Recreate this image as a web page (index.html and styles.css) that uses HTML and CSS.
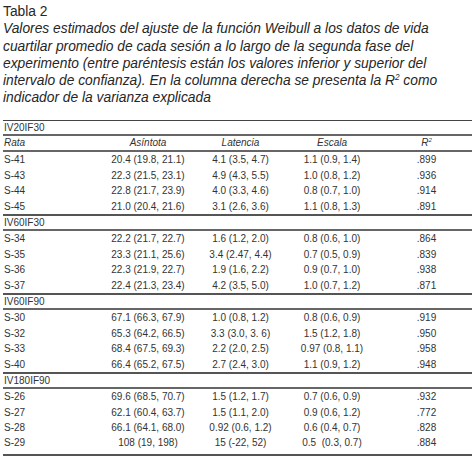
FILE: index.html
```html
<!DOCTYPE html>
<html lang="es">
<head>
<meta charset="utf-8">
<title>Tabla 2</title>
<link rel="stylesheet" href="styles.css">
</head>
<body>
<div class="page">
  <div class="caption">
    <div class="title">Tabla 2</div>
    <div class="desc">Valores estimados del ajuste de la función Weibull a los datos de vida<br>cuartilar promedio de cada sesión a lo largo de la segunda fase del<br>experimento (entre paréntesis están los valores inferior y superior del<br>intervalo de confianza). En la columna derecha se presenta la R<sup>2</sup> como<br>indicador de la varianza explicada</div>
  </div>
  <table class="data">
    <colgroup>
      <col class="c-rata"><col class="c-asi"><col class="c-lat"><col class="c-esc"><col class="c-r2">
    </colgroup>
    <tbody>
      <tr class="group first"><td colspan="5">IV20IF30</td></tr>
      <tr class="head"><td class="l">Rata</td><td>Asíntota</td><td>Latencia</td><td>Escala</td><td>R<sup>2</sup></td></tr>
      <tr><td class="l">S-41</td><td>20.4 (19.8, 21.1)</td><td>4.1 (3.5, 4.7)</td><td>1.1 (0.9, 1.4)</td><td>.899</td></tr>
      <tr><td class="l">S-43</td><td>22.3 (21.5, 23.1)</td><td>4.9 (4.3, 5.5)</td><td>1.0 (0.8, 1.2)</td><td>.936</td></tr>
      <tr><td class="l">S-44</td><td>22.8 (21.7, 23.9)</td><td>4.0 (3.3, 4.6)</td><td>0.8 (0.7, 1.0)</td><td>.914</td></tr>
      <tr class="last"><td class="l">S-45</td><td>21.0 (20.4, 21.6)</td><td>3.1 (2.6, 3.6)</td><td>1.1 (0.8, 1.3)</td><td>.891</td></tr>

      <tr class="group"><td colspan="5">IV60IF30</td></tr>
      <tr><td class="l">S-34</td><td>22.2 (21.7, 22.7)</td><td>1.6 (1.2, 2.0)</td><td>0.8 (0.6, 1.0)</td><td>.864</td></tr>
      <tr><td class="l">S-35</td><td>23.3 (21.1, 25.6)</td><td>3.4 (2.47, 4.4)</td><td>0.7 (0.5, 0.9)</td><td>.839</td></tr>
      <tr><td class="l">S-36</td><td>22.3 (21.9, 22.7)</td><td>1.9 (1.6, 2.2)</td><td>0.9 (0.7, 1.0)</td><td>.938</td></tr>
      <tr class="last"><td class="l">S-37</td><td>22.4 (21.3, 23.4)</td><td>4.2 (3.5, 5.0)</td><td>1.0 (0.7, 1.2)</td><td>.871</td></tr>

      <tr class="group"><td colspan="5">IV60IF90</td></tr>
      <tr><td class="l">S-30</td><td>67.1 (66.3, 67.9)</td><td>1.0 (0.8, 1.2)</td><td>0.8 (0.6, 0.9)</td><td>.919</td></tr>
      <tr><td class="l">S-32</td><td>65.3 (64.2, 66.5)</td><td>3.3 (3.0, 3. 6)</td><td>1.5 (1.2, 1.8)</td><td>.950</td></tr>
      <tr><td class="l">S-33</td><td>68.4 (67.5, 69.3)</td><td>2.2 (2.0, 2.5)</td><td>0.97 (0.8, 1.1)</td><td>.958</td></tr>
      <tr class="last"><td class="l">S-40</td><td>66.4 (65.2, 67.5)</td><td>2.7 (2.4, 3.0)</td><td>1.1 (0.9, 1.2)</td><td>.948</td></tr>

      <tr class="group"><td colspan="5">IV180IF90</td></tr>
      <tr><td class="l">S-26</td><td>69.6 (68.5, 70.7)</td><td>1.5 (1.2, 1.7)</td><td>0.7 (0.6, 0.9)</td><td>.932</td></tr>
      <tr><td class="l">S-27</td><td>62.1 (60.4, 63.7)</td><td>1.5 (1.1, 2.0)</td><td>0.9 (0.6, 1.2)</td><td>.772</td></tr>
      <tr><td class="l">S-28</td><td>66.1 (64.1, 68.0)</td><td>0.92 (0.6, 1.2)</td><td>0.6 (0.4, 0.7)</td><td>.828</td></tr>
      <tr class="last final"><td class="l">S-29</td><td>108 (19, 198)</td><td>15 (-22, 52)</td><td>0.5&nbsp; (0.3, 0.7)</td><td>.884</td></tr>
    </tbody>
  </table>
</div>
</body>
</html>
```

FILE: styles.css
```css
html, body {
  margin: 0;
  padding: 0;
  background: #ffffff;
}

.page {
  padding: 3px 2px 0 3px;
  font-family: "Liberation Sans", Arial, sans-serif;
  color: #262626;
}

.caption {
  font-size: 13.8px;
  line-height: 17.3px;
  white-space: nowrap;
}

.caption .desc {
  font-style: italic;
}

.caption sup,
.data sup {
  font-size: 0.6em;
  line-height: 0;
  vertical-align: 0.6em;
}

.data {
  margin-top: 13px;
  width: 469px;
  border-collapse: collapse;
  table-layout: fixed;
  font-size: 10px;
  color: #333333;
}

.c-rata { width: 95px; }
.c-asi { width: 100px; }
.c-lat { width: 85px; }
.c-esc { width: 98px; }
.c-r2 { width: 91px; }

.data td {
  padding: 0;
  height: 15.5px;
  text-align: center;
  white-space: nowrap;
  vertical-align: middle;
}

.data td.l {
  text-align: left;
  padding-left: 1px;
}

.data tr.group td {
  text-align: left;
  padding-left: 1px;
  height: 13px;
  border-top: 2px solid #555555;
  border-bottom: 2px solid #666666;
}

.data tr.group.first td {
  border-top: 1.5px solid #444444;
}

.data tr.head td {
  font-style: italic;
  height: 14px;
  border-bottom: 2px solid #666666;
}

.data tr.last td {
  border-bottom: 2px solid #555555;
}

.data tr.final td {
  height: 14px;
  padding-bottom: 5px;
}
```
